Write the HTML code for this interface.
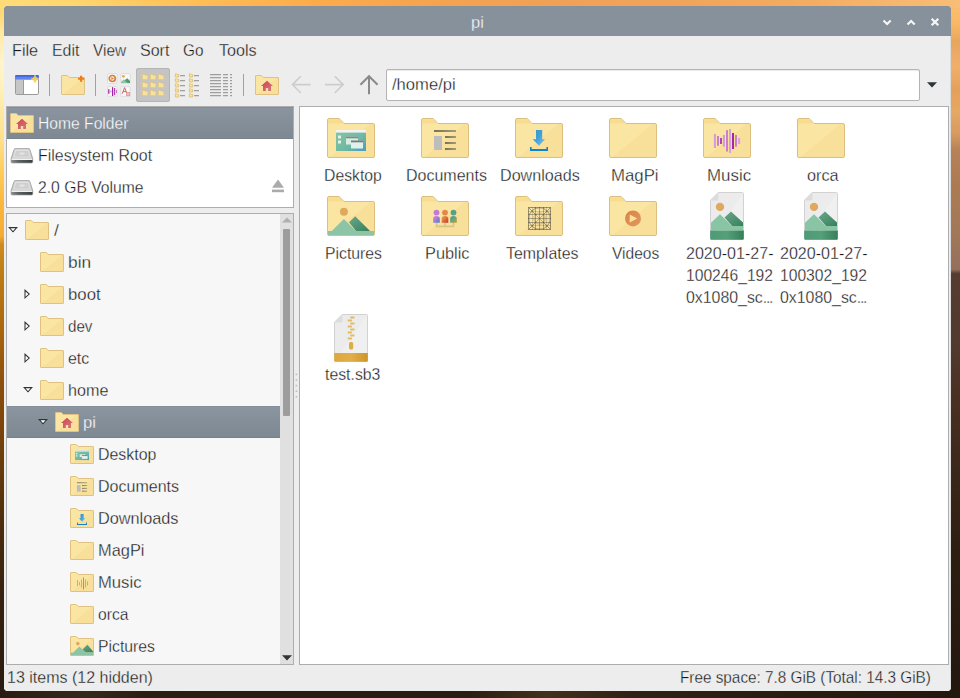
<!DOCTYPE html>
<html><head><meta charset="utf-8"><title>pi</title>
<style>
*{margin:0;padding:0;box-sizing:border-box}
html,body{width:960px;height:698px;overflow:hidden}
body{position:relative;font-family:"Liberation Sans",sans-serif;font-size:17px;background:#2a1c11}
.a{position:absolute}
.t{position:absolute;white-space:pre;line-height:20px;height:20px;transform-origin:0 0;font-size:17px}
svg{position:absolute;overflow:visible}
#wall-top{left:0;top:0;width:960px;height:8px;background:linear-gradient(90deg,#ffdc7a 0,#ffd56e 8%,#febf57 20%,#fcab4c 33%,#f4a350 46%,#efa157 58%,#f0a45a 70%,#f3ab60 82%,#f6b56c 92%,#f8bd76 100%)}
#wall-left{left:0;top:0;width:8px;height:698px;background:linear-gradient(180deg,#ffd668 0,#ffdc7c 2.5%,#ffeaa6 5%,#fff5cc 9%,#fff2c0 12%,#ffe79a 17%,#ffe08c 20%,#ffca54 25%,#fab73e 29%,#f5ac36 33.8%,#cf8c20 35%,#c4841a 37%,#bc7a14 40%,#aa680f 47%,#8e500c 54.5%,#7a440c 61.5%,#5e360c 70%,#4c2d0c 75%,#35210f 86%,#2a1b10 100%)}
#wall-right{left:944px;top:0;width:16px;height:698px;background:linear-gradient(180deg,#efae66 0,#fbbd6c 1.5%,#f8b764 3.5%,#e7a65e 6%,#efb06a 9.5%,#e5a058 13%,#e6a862 16%,#d99b60 19%,#b88157 21.5%,#ad7b52 26%,#a27858 33%,#94705c 38.6%,#573c30 39.2%,#51392d 50%,#4a3021 57%,#3c281a 67%,#2e1e12 79%,#23170e 100%)}
#wall-bot{left:0;top:686px;width:960px;height:12px;background:linear-gradient(90deg,#2a1c12 0,#342a1a 9%,#2b1d12 15%,#2c1e12 49%,#44311b 57%,#2f2114 66%,#291b10 85%,#24180e 100%)}
#win{left:4px;top:6px;width:947px;height:685px;background:#ededed;clip-path:polygon(2px 0,945px 0,947px 2px,947px 683px,945px 685px,2px 685px,0 683px,0 2px)}
#title{left:0;top:0;width:947px;height:30px;background:#87919b}
.pane{border:1px solid #adadad;background:#fff}
.sel{background:linear-gradient(180deg,#8b959f,#7e8892);box-shadow:inset 0 1px 0 #848e98,inset 0 -1px 0 #78828c}
.sep{width:1px;background:#a2a2a2}
</style></head>
<body>

<svg width="0" height="0" style="position:absolute">
<defs>
<linearGradient id="gFold" x1="0" y1="0" x2="1" y2="1"><stop offset="0" stop-color="#fae6a4"/><stop offset="0.52" stop-color="#fae5a2"/><stop offset="0.53" stop-color="#f8e09a"/><stop offset="1" stop-color="#f8e09a"/></linearGradient>
<linearGradient id="gTeal" x1="0" y1="0" x2="1" y2="1"><stop offset="0" stop-color="#86c6a2"/><stop offset="0.6" stop-color="#6fb8a4"/><stop offset="1" stop-color="#449cc0"/></linearGradient>
<linearGradient id="gBlue" x1="0" y1="0" x2="1" y2="1"><stop offset="0" stop-color="#2f97d2"/><stop offset="0.5" stop-color="#43a2d8"/><stop offset="1" stop-color="#8cc6e6"/></linearGradient>
<linearGradient id="gDk" x1="0" y1="0" x2="1" y2="0"><stop offset="0" stop-color="#767058"/><stop offset="1" stop-color="#a49c7c"/></linearGradient>
<linearGradient id="gGreenD" x1="0" y1="0" x2="1" y2="1"><stop offset="0" stop-color="#69a88a"/><stop offset="1" stop-color="#37805c"/></linearGradient>
<linearGradient id="gBand" x1="0" y1="0" x2="1" y2="0"><stop offset="0" stop-color="#4d9a76"/><stop offset="0.5" stop-color="#55a07c"/><stop offset="1" stop-color="#35805a"/></linearGradient>
<linearGradient id="gGold" x1="0" y1="0" x2="1" y2="0"><stop offset="0" stop-color="#dfa73c"/><stop offset="0.5" stop-color="#e2ae4a"/><stop offset="1" stop-color="#cf9426"/></linearGradient>
<linearGradient id="gSun" x1="0" y1="0" x2="1" y2="1"><stop offset="0" stop-color="#dcae52"/><stop offset="1" stop-color="#e2a46c"/></linearGradient>
<linearGradient id="gVid" x1="0" y1="0" x2="1" y2="1"><stop offset="0" stop-color="#d98242"/><stop offset="1" stop-color="#e39a60"/></linearGradient>
<linearGradient id="gHouse" x1="0" y1="0" x2="1" y2="1"><stop offset="0" stop-color="#c94450"/><stop offset="1" stop-color="#da7880"/></linearGradient>
<linearGradient id="gP1" x1="0" y1="0" x2="1" y2="1"><stop offset="0.3" stop-color="#c47ad8"/><stop offset="1" stop-color="#3f82d8"/></linearGradient>
<linearGradient id="gP2" x1="0" y1="0" x2="1" y2="1"><stop offset="0.3" stop-color="#e08a48"/><stop offset="1" stop-color="#cc2f26"/></linearGradient>
<linearGradient id="gP3" x1="0" y1="0" x2="1" y2="1"><stop offset="0.3" stop-color="#56a088"/><stop offset="1" stop-color="#c0a23c"/></linearGradient>
<linearGradient id="gDrive" x1="0" y1="0" x2="0" y2="1"><stop offset="0" stop-color="#d9d9d9"/><stop offset="1" stop-color="#c2c2c2"/></linearGradient>
<linearGradient id="gDriveF" x1="0" y1="0" x2="1" y2="0"><stop offset="0" stop-color="#8a8c8c"/><stop offset="0.35" stop-color="#5c6060"/><stop offset="1" stop-color="#3c4040"/></linearGradient>
<linearGradient id="gPaper" x1="0" y1="0" x2="1" y2="1"><stop offset="0" stop-color="#ebebeb"/><stop offset="0.5" stop-color="#ececec"/><stop offset="0.51" stop-color="#f0f0f0"/><stop offset="1" stop-color="#f0f0f0"/></linearGradient>

<symbol id="fL" viewBox="0 0 48 40">
 <path d="M2 .5H12.2L17 5.5H46Q47.5 5.5 47.5 7V38Q47.5 39.5 46 39.5H2Q.5 39.5 .5 38V2Q.5 .5 2 .5Z" fill="url(#gFold)" stroke="#dcbf80" stroke-width="1"/>
 <path d="M1 1.2H12L16.2 5.6H1Z" fill="#f5d988" opacity=".75"/>
</symbol>
<symbol id="fS" viewBox="0 0 24 20">
 <path d="M1 .5H6.3L8.3 2.5H23Q23.5 2.5 23.5 3V19Q23.5 19.5 23 19.5H1Q.5 19.5 .5 19V1Q.5 .5 1 .5Z" fill="url(#gFold)" stroke="#dfc183" stroke-width="1"/>
</symbol>

<symbol id="eDesktop" viewBox="0 0 48 40">
 <rect x="9" y="12" width="30" height="21" fill="url(#gTeal)"/>
 <rect x="9" y="12" width="30" height="2.6" fill="#f4f1f4"/>
 <rect x="11" y="17.5" width="3" height="3" fill="#e4f2ea"/><rect x="11" y="22.5" width="3" height="3" fill="#e4f2ea"/>
 <rect x="19" y="18.5" width="12" height="8" fill="#d8ece4"/><rect x="19" y="18.5" width="12" height="1.8" fill="#7d8a86"/>
 <rect x="24" y="22.5" width="12" height="8" fill="#e2f0ec"/><rect x="24" y="22.5" width="12" height="1.8" fill="#6f7c78"/>
</symbol>
<symbol id="eDocs" viewBox="0 0 48 40">
 <rect x="13" y="12" width="22" height="2" fill="url(#gDk)"/>
 <rect x="13" y="18" width="8" height="14" fill="#bdbdbd"/>
 <rect x="24" y="18" width="11" height="2" fill="url(#gDk)"/><rect x="24" y="24" width="11" height="2" fill="url(#gDk)"/><rect x="24" y="30" width="11" height="2" fill="url(#gDk)"/>
</symbol>
<symbol id="eDown" viewBox="0 0 48 40">
 <path d="M21 12H27.2V21.2H30L24 27.8L17.8 21.2H21Z" fill="url(#gBlue)"/>
 <path d="M15 29H16.6V31H31.4V29H33V33H15Z" fill="#1583c8"/>
</symbol>
<symbol id="eMusic" viewBox="0 0 48 40">
 <rect x="10.9" y="16" width="2" height="14" fill="#d49adb"/>
 <rect x="14" y="18" width="2" height="9.8" fill="#c87fd0"/>
 <rect x="17" y="20" width="2" height="6" fill="#b245b4"/>
 <rect x="19.9" y="17" width="2" height="11.7" fill="#d49adb"/>
 <rect x="23" y="12.2" width="2" height="21.3" fill="#c87fd0"/>
 <rect x="26" y="11" width="2" height="24" fill="#d6a2de"/>
 <rect x="29" y="15" width="2" height="16" fill="#a4279f"/>
 <rect x="32" y="17" width="2" height="11.7" fill="#c87fd0"/>
 <rect x="35.1" y="20" width="2" height="6" fill="#d6a2de"/>
</symbol>
<symbol id="eDownS" viewBox="0 0 24 20">
 <path d="M10.5 6.1H13.7V10.2H15.2L12.1 13.7L9 10.2H10.5Z" fill="url(#gBlue)"/>
 <path d="M7 14.6H7.9V15.9H16.1V14.6H17V17H7Z" fill="#1583c8"/>
</symbol>
<symbol id="ePicsS" viewBox="0 0 24 20">
 <circle cx="7.8" cy="7.6" r="1.8" fill="url(#gSun)"/>
 <path d="M12.4 13.6L17.4 8.8L23.2 15.4V16.6H15.4Z" fill="url(#gGreenD)"/>
 <path d="M.8 16.4H3.2L9.4 10.4L15.6 16.4H23.2V19.2H.8Z" fill="#8cc4a5"/>
</symbol>
<symbol id="eMusicS" viewBox="0 0 24 20">
 <g fill="#cf8fd8"><rect x="7.1" y="8" width=".9" height="6.2"/><rect x="9.1" y="10" width=".9" height="3"/><rect x="11.1" y="7.5" width=".9" height="8"/><rect x="13.1" y="5.4" width=".9" height="12.2" fill="#c568cc"/><rect x="15.1" y="7.5" width=".9" height="8"/><rect x="17.1" y="9.5" width=".9" height="4"/></g>
</symbol>
<symbol id="ePics" viewBox="0 0 48 40">
 <circle cx="16.9" cy="15.75" r="4" fill="url(#gSun)"/>
 <path d="M22 26.2L28.2 20.2L43 35H29Z" fill="url(#gGreenD)"/>
 <path d="M1 35H4.8L16.9 23L29 35H47V39H1Z" fill="#8cc4a5"/>
</symbol>
<symbol id="ePublic" viewBox="0 0 48 40">
 <path d="M15.5 26.5V30.4H32.5V26.5M24 26.5V30.4" fill="none" stroke="#d8c48a" stroke-width="1.6"/>
 <circle cx="15.5" cy="16.6" r="2.9" fill="#c47ad8"/><path d="M12.2 26.8V22.5Q12.2 20 15.5 20Q18.8 20 18.8 22.5V26.8Z" fill="url(#gP1)"/>
 <circle cx="24" cy="16.6" r="2.9" fill="#e08a48"/><path d="M20.7 26.8V22.5Q20.7 20 24 20Q27.3 20 27.3 22.5V26.8Z" fill="url(#gP2)"/>
 <circle cx="32.5" cy="16.6" r="2.9" fill="#56a088"/><path d="M29.2 26.8V22.5Q29.2 20 32.5 20Q35.8 20 35.8 22.5V26.8Z" fill="url(#gP3)"/>
</symbol>
<symbol id="eTempl" viewBox="0 0 48 40">
 <g fill="none" stroke="#3c3c3c">
 <rect x="13.5" y="11.5" width="22" height="22" stroke-width="1" opacity=".5"/>
 <path d="M20.5 11V34M24.5 11V34M28.5 11V34M13 18.5H36M13 22.5H36M13 26.5H36" stroke-width="1" opacity=".4"/>
 <path d="M17.5 11V34M31.5 11V34M13 15.5H36M13 29.5H36" stroke-width="1" opacity=".2"/>
 <path d="M13.5 11.5L35.5 33.5M35.5 11.5L13.5 33.5" stroke-width=".7" opacity=".45"/>
 <path d="M13.5 11.5L20.5 18.5M13.5 18.5L20.5 11.5M28.5 11.5L35.5 18.5M28.5 18.5L35.5 11.5M13.5 26.5L20.5 33.5M13.5 33.5L20.5 26.5M28.5 26.5L35.5 33.5M28.5 33.5L35.5 26.5" stroke-width=".6" opacity=".4"/>
 <circle cx="24.5" cy="22.5" r="10.6" stroke-width=".7" opacity=".45"/><circle cx="24.5" cy="22.5" r="5.6" stroke-width=".7" opacity=".4"/>
 </g>
</symbol>
<symbol id="eVideo" viewBox="0 0 48 40">
 <circle cx="24" cy="22.4" r="8" fill="url(#gVid)"/>
 <path d="M20.7 18.4V26.6L28.2 22.4Z" fill="#fae3a0"/>
</symbol>
<symbol id="eHome" viewBox="0 0 48 40">
 <path d="M24 11.4L36 21.8H32V32H26.4V26H21.6V32H16V21.8H12Z" fill="url(#gHouse)"/>
</symbol>

<symbol id="imgfile" viewBox="0 0 34 48">
 <path d="M8.2 .5H32.5Q33.5 .5 33.5 1.5V46.5Q33.5 47.5 32.5 47.5H1.5Q.5 47.5 .5 46.5V8.2Z" fill="url(#gPaper)" stroke="#d2d2d2"/>
 <path d="M8.4 .8V7Q8.4 8.4 7 8.4H.8Z" fill="#dcdcdc"/>
 <circle cx="10" cy="14.9" r="4.2" fill="url(#gSun)"/>
 <path d="M14.5 25.5L21 19.5L33 30.6V34H22Z" fill="url(#gGreenD)"/>
 <path d="M1 30.7L10 22.3L22 34H33V38.6H1Z" fill="#88c5a4"/>
 <path d="M.2 38.6H33.8V46.6Q33.8 47.8 32.6 47.8H1.4Q.2 47.8 .2 46.6Z" fill="url(#gBand)"/>
</symbol>
<symbol id="zipfile" viewBox="0 0 34 48">
 <path d="M8.2 .5H32.5Q33.5 .5 33.5 1.5V46.5Q33.5 47.5 32.5 47.5H1.5Q.5 47.5 .5 46.5V8.2Z" fill="url(#gPaper)" stroke="#d2d2d2"/>
 <path d="M8.4 .8V7Q8.4 8.4 7 8.4H.8Z" fill="#dcdcdc"/>
 <g fill="#e5bb5c">
 <rect x="16.2" y="2.6" width="4.4" height="1.8" rx=".6"/><rect x="13.6" y="5.6" width="4.4" height="1.8" rx=".6"/>
 <rect x="16.2" y="8.6" width="4.4" height="1.8" rx=".6"/><rect x="13.6" y="11.6" width="4.4" height="1.8" rx=".6"/>
 <rect x="16.2" y="14.6" width="4.4" height="1.8" rx=".6"/><rect x="13.6" y="17.6" width="4.4" height="1.8" rx=".6"/>
 <rect x="16.2" y="20.6" width="4.4" height="1.8" rx=".6"/><rect x="13.6" y="23.6" width="4.4" height="1.8" rx=".6"/>
 <rect x="15" y="28" width="4.2" height="7.6" rx="1.6" fill="#dfad48"/>
 </g>
 <path d="M.2 39H33.8V46.6Q33.8 47.8 32.6 47.8H1.4Q.2 47.8 .2 46.6Z" fill="url(#gGold)"/>
</symbol>
<symbol id="drive" viewBox="0 0 24 16">
 <path d="M5 .6H19Q19.5 .6 19.7 1.1L22.7 10.4V13.8Q22.7 14.9 21.6 14.9H2.2Q1.1 14.9 1.1 13.8V10.4L4.3 1.1Q4.5 .6 5 .6Z" fill="url(#gDrive)" stroke="#9a9a9a" stroke-width=".8"/>
 <path d="M5.8 2.4H18.2L20.2 9.2H3.6Z" fill="#d0d0d0" stroke="#e6e6e6" stroke-width=".7"/>
 <ellipse cx="12" cy="5.6" rx="3" ry="1.1" fill="#e4e4e4"/>
 <path d="M1.3 12.1H22.5V13.8Q22.5 14.7 21.6 14.7H2.2Q1.3 14.7 1.3 13.8Z" fill="url(#gDriveF)"/>
 <path d="M1.8 11.3H22" stroke="#f6f6f6" stroke-width="1.2"/>
</symbol>
</defs></svg>

<div class="a" id="wall-left"></div><div class="a" id="wall-right"></div><div class="a" id="wall-top"></div><div class="a" id="wall-bot"></div>
<div class="a" id="win"><div class="a" id="title"></div></div>
<div class="a" style="left:950px;top:36px;width:1px;height:653px;background:#d9dcdf"></div>
<svg style="left:870px;top:6px" width="80" height="30" viewBox="870 6 80 30"><g fill="none" stroke="#f6f6f6" stroke-width="2.1"><path d="M883.5 20.5L887.1 24.1L890.7 20.5"/><path d="M907.5 24.5L911.1 20.9L914.7 24.5"/><path d="M931.7 18.7L938.3 25.3M938.3 18.7L931.7 25.3" stroke-width="2.25"/></g></svg>
<svg style="left:15px;top:75px" width="24" height="20" viewBox="0 0 24 20"><rect x=".5" y=".5" width="23" height="19" rx="1.3" fill="#fff" stroke="#9a9a9a"/><path d="M0 4.4V1.6Q0 0 1.6 0H22.4Q24 0 24 1.6V4.4Z" fill="#6283ee"/><path d="M0 1.8V1.6Q0 0 1.6 0H22.4Q24 0 24 1.6V1.8Z" fill="#4464dc"/><rect x="1" y="4.6" width="7.2" height="14.4" fill="#c6c6c6"/><rect x="8" y="4.6" width="1" height="14.6" fill="#9a9a9a"/><rect x=".8" y="4.2" width="22.4" height=".8" fill="#9a9a9a"/><path d="M20 .2Q20.4 3.4 23.8 4Q20.4 4.6 20 7.8Q19.6 4.6 16.2 4Q19.6 3.4 20 .2Z" fill="#f5cf5c" stroke="#f5cf5c" stroke-width=".8" stroke-linejoin="round"/></svg>
<div class="a sep" style="left:49px;top:74px;height:22px"></div>
<svg style="left:61px;top:75px" width="24" height="20"><use href="#fS"/></svg>
<svg style="left:61px;top:75px" width="24" height="20" viewBox="0 0 24 20"><path d="M17.1 3.8H23.1M20.1 .8V6.8" stroke="#ee7a18" stroke-width="2.1" fill="none"/></svg>
<div class="a sep" style="left:95px;top:74px;height:22px"></div>
<svg style="left:107px;top:73px" width="24" height="24" viewBox="0 0 24 24"><g fill="#f7f7f7" stroke="#dadada" stroke-width=".9"><rect x=".6" y=".6" width="9.4" height="9.8" rx=".8"/><rect x="13.8" y=".6" width="9.4" height="9.8" rx=".8"/><rect x=".6" y="13.6" width="9.4" height="9.8" rx=".8"/><rect x="13.8" y="13.6" width="9.4" height="9.8" rx=".8"/></g><circle cx="5.3" cy="5.5" r="3" fill="none" stroke="#da8038" stroke-width="1.7"/><path d="M4.3 3.9V7.1L7.1 5.5Z" fill="#da8038"/><circle cx="16.4" cy="3.3" r="1.4" fill="#dcae52"/><path d="M17.4 7.6L20.2 5.2L23 8V10H17.4Z" fill="#4f9874"/><path d="M14 9L16.8 6.2L20.6 10H14Z" fill="#8cc4a5"/><g fill="#a11fa0"><rect x="1.2" y="16.2" width="1.2" height="4.6"/><rect x="3.4" y="17.6" width="1" height="1.8" fill="#c070c4"/><rect x="5" y="14.2" width="1.2" height="8.8"/><rect x="7" y="15" width="1.2" height="7.2" fill="#b040b0"/><rect x="9" y="17" width=".9" height="3" fill="#c070c4"/></g><path d="M15.2 20.8L17.6 14.6L20 20.8M16.1 18.6H19.1" fill="none" stroke="#d6606a" stroke-width="1"/><rect x="19.6" y="19.4" width="3.2" height="3.4" fill="#efb8ba" stroke="#dc8a90" stroke-width=".6"/></svg>
<div class="a" style="left:136px;top:68px;width:34px;height:34px;background:#c4c4c4;border:1px solid #b4b4b4;border-radius:2px"></div>
<svg style="left:142px;top:74px" width="22" height="22" viewBox="0 0 22 22"><path d="M0.4 0.4H2.4L3.2 1.2H5.8V5.6H0.4Z" fill="#f9e29c" stroke="#e3c67e" stroke-width=".8"/><path d="M8.4 0.4H10.4L11.2 1.2H13.8V5.6H8.4Z" fill="#f9e29c" stroke="#e3c67e" stroke-width=".8"/><path d="M16.4 0.4H18.4L19.2 1.2H21.8V5.6H16.4Z" fill="#f9e29c" stroke="#e3c67e" stroke-width=".8"/><path d="M0.4 8.4H2.4L3.2 9.2H5.8V13.6H0.4Z" fill="#f9e29c" stroke="#e3c67e" stroke-width=".8"/><path d="M8.4 8.4H10.4L11.2 9.2H13.8V13.6H8.4Z" fill="#f9e29c" stroke="#e3c67e" stroke-width=".8"/><path d="M16.4 8.4H18.4L19.2 9.2H21.8V13.6H16.4Z" fill="#f9e29c" stroke="#e3c67e" stroke-width=".8"/><path d="M0.4 16.4H2.4L3.2 17.2H5.8V21.6H0.4Z" fill="#f9e29c" stroke="#e3c67e" stroke-width=".8"/><path d="M8.4 16.4H10.4L11.2 17.2H13.8V21.6H8.4Z" fill="#f9e29c" stroke="#e3c67e" stroke-width=".8"/><path d="M16.4 16.4H18.4L19.2 17.2H21.8V21.6H16.4Z" fill="#f9e29c" stroke="#e3c67e" stroke-width=".8"/></svg>
<svg style="left:175px;top:73px" width="24" height="24" viewBox="0 0 24 24"><path d="M0.4 0.8H1.6L2.2 1.4H3.6V4.0H0.4Z" fill="#f9e29c" stroke="#dcbe70" stroke-width=".8"/><rect x="5" y="2.2" width="5" height="1" fill="#8c8c8c"/><path d="M14.4 0.8H15.6L16.2 1.4H17.6V4.0H14.4Z" fill="#f9e29c" stroke="#dcbe70" stroke-width=".8"/><rect x="19" y="2.2" width="5" height="1" fill="#8c8c8c"/><path d="M0.4 5.800000000000001H1.6L2.2 6.4H3.6V9.0H0.4Z" fill="#f9e29c" stroke="#dcbe70" stroke-width=".8"/><rect x="5" y="7.2" width="5" height="1" fill="#8c8c8c"/><path d="M14.4 5.800000000000001H15.6L16.2 6.4H17.6V9.0H14.4Z" fill="#f9e29c" stroke="#dcbe70" stroke-width=".8"/><rect x="19" y="7.2" width="5" height="1" fill="#8c8c8c"/><path d="M0.4 10.8H1.6L2.2 11.4H3.6V14.0H0.4Z" fill="#f9e29c" stroke="#dcbe70" stroke-width=".8"/><rect x="5" y="12.200000000000001" width="5" height="1" fill="#8c8c8c"/><path d="M14.4 10.8H15.6L16.2 11.4H17.6V14.0H14.4Z" fill="#f9e29c" stroke="#dcbe70" stroke-width=".8"/><rect x="19" y="12.200000000000001" width="5" height="1" fill="#8c8c8c"/><path d="M0.4 15.8H1.6L2.2 16.4H3.6V19.0H0.4Z" fill="#f9e29c" stroke="#dcbe70" stroke-width=".8"/><rect x="5" y="17.2" width="5" height="1" fill="#8c8c8c"/><path d="M14.4 15.8H15.6L16.2 16.4H17.6V19.0H14.4Z" fill="#f9e29c" stroke="#dcbe70" stroke-width=".8"/><rect x="19" y="17.2" width="5" height="1" fill="#8c8c8c"/><path d="M0.4 20.799999999999997H1.6L2.2 21.4H3.6V24.0H0.4Z" fill="#f9e29c" stroke="#dcbe70" stroke-width=".8"/><rect x="5" y="22.2" width="5" height="1" fill="#8c8c8c"/><path d="M14.4 20.799999999999997H15.6L16.2 21.4H17.6V24.0H14.4Z" fill="#f9e29c" stroke="#dcbe70" stroke-width=".8"/><rect x="19" y="22.2" width="5" height="1" fill="#8c8c8c"/></svg>
<svg style="left:210px;top:74px" width="22" height="22" viewBox="0 0 22 22"><rect x="0" y="0.2" width="11" height="1" fill="#8a8a8a"/><rect x="13" y="0.2" width="5" height="1" fill="#8a8a8a"/><rect x="20" y="0.2" width="2" height="1" fill="#8a8a8a"/><rect x="0" y="3.2" width="11" height="1" fill="#8a8a8a"/><rect x="13" y="3.2" width="5" height="1" fill="#8a8a8a"/><rect x="20" y="3.2" width="2" height="1" fill="#8a8a8a"/><rect x="0" y="6.2" width="11" height="1" fill="#8a8a8a"/><rect x="13" y="6.2" width="5" height="1" fill="#8a8a8a"/><rect x="20" y="6.2" width="2" height="1" fill="#8a8a8a"/><rect x="0" y="9.2" width="11" height="1" fill="#8a8a8a"/><rect x="13" y="9.2" width="5" height="1" fill="#8a8a8a"/><rect x="20" y="9.2" width="2" height="1" fill="#8a8a8a"/><rect x="0" y="12.2" width="11" height="1" fill="#8a8a8a"/><rect x="13" y="12.2" width="5" height="1" fill="#8a8a8a"/><rect x="20" y="12.2" width="2" height="1" fill="#8a8a8a"/><rect x="0" y="15.2" width="11" height="1" fill="#8a8a8a"/><rect x="13" y="15.2" width="5" height="1" fill="#8a8a8a"/><rect x="20" y="15.2" width="2" height="1" fill="#8a8a8a"/><rect x="0" y="18.2" width="11" height="1" fill="#8a8a8a"/><rect x="13" y="18.2" width="5" height="1" fill="#8a8a8a"/><rect x="20" y="18.2" width="2" height="1" fill="#8a8a8a"/><rect x="0" y="21.2" width="11" height="1" fill="#8a8a8a"/><rect x="13" y="21.2" width="5" height="1" fill="#8a8a8a"/><rect x="20" y="21.2" width="2" height="1" fill="#8a8a8a"/></svg>
<div class="a sep" style="left:243px;top:74px;height:22px"></div>
<svg style="left:255px;top:75px" width="24" height="20"><use href="#fS"/><use href="#eHome" width="24" height="20"/></svg>
<svg style="left:288px;top:70px" width="96" height="30" viewBox="288 70 96 30"><g fill="none" stroke-linecap="butt"><path d="M310.6 84.6H293M300.8 76.2L292.4 84.6L300.8 93" stroke="#cdcdcd" stroke-width="1.6"/><path d="M325 84.6H342.6M334.8 76.2L343.2 84.6L334.8 93" stroke="#cdcdcd" stroke-width="1.6"/><path d="M369 94.2V76.4M360.4 84.8L369 76.2L377.6 84.8" stroke="#8a8a8a" stroke-width="2"/></g></svg>
<div class="a" style="left:386px;top:69px;width:534px;height:32px;background:#fff;border:1px solid #b4b4b4;border-radius:2px;box-shadow:inset 0 1px 1px #e9e9e9"></div>
<svg style="left:927px;top:82px" width="10" height="6" viewBox="0 0 10 6"><path d="M0 .2H10L5 5.4Z" fill="#2e3438"/></svg>
<div class="a pane" style="left:6px;top:106px;width:288px;height:102px"></div>
<div class="a sel" style="left:7px;top:107px;width:286px;height:32px"></div>
<svg style="left:10px;top:113px" width="24" height="20"><use href="#fS"/><use href="#eHome" width="24" height="20"/></svg>
<svg style="left:10px;top:148px" width="24" height="16"><use href="#drive"/></svg>
<svg style="left:10px;top:180px" width="24" height="16"><use href="#drive"/></svg>
<svg style="left:271px;top:179px" width="14" height="14" viewBox="0 0 14 14"><path d="M7 .6L13 8.8H1Z" fill="#ababab"/><rect x="1" y="10.6" width="12" height="2.6" fill="#ababab"/></svg>
<div class="a pane" style="left:6px;top:213px;width:288px;height:452px;background:#f7f7f7"></div>
<div class="a sel" style="left:7px;top:406px;width:273px;height:32px"></div>
<div class="a" style="left:280px;top:214px;width:13px;height:450px;background:#e0e0e0"></div>
<div class="a" style="left:283px;top:229px;width:7px;height:187px;background:#9d9d9d;border-radius:1px"></div>
<svg style="left:282px;top:217px" width="10" height="6" viewBox="0 0 10 6"><path d="M0 5.6H10L5 .4Z" fill="#b0b0b0"/></svg>
<svg style="left:282px;top:655px" width="10" height="6" viewBox="0 0 10 6"><path d="M0 .2H10L5 5.4Z" fill="#2e3438"/></svg>
<svg style="left:295px;top:373px" width="3" height="26" viewBox="0 0 3 26"><rect x=".6" y="0.6" width="1.6" height="1.6" fill="#bebebe"/><rect x=".6" y="6.2" width="1.6" height="1.6" fill="#bebebe"/><rect x=".6" y="11.8" width="1.6" height="1.6" fill="#bebebe"/><rect x=".6" y="17.4" width="1.6" height="1.6" fill="#bebebe"/><rect x=".6" y="23.0" width="1.6" height="1.6" fill="#bebebe"/></svg>
<svg style="left:25px;top:220px" width="24" height="20"><use href="#fS"/></svg>
<svg style="left:6.800000000000001px;top:225px" width="12" height="10" viewBox="0 0 12 10"><path d="M2.2 2.6H9.8L6 6.8Z" fill="#fff" stroke="#2e3436" stroke-width="1.05" stroke-linejoin="miter"/></svg>
<svg style="left:40px;top:252px" width="24" height="20"><use href="#fS"/></svg>
<svg style="left:40px;top:284px" width="24" height="20"><use href="#fS"/></svg>
<svg style="left:22.4px;top:287.8px" width="10" height="12" viewBox="0 0 10 12"><path d="M3 2.3V9.9L7.2 6.1Z" fill="#fff" stroke="#2e3436" stroke-width="1.05" stroke-linejoin="miter"/></svg>
<svg style="left:40px;top:316px" width="24" height="20"><use href="#fS"/></svg>
<svg style="left:22.4px;top:319.8px" width="10" height="12" viewBox="0 0 10 12"><path d="M3 2.3V9.9L7.2 6.1Z" fill="#fff" stroke="#2e3436" stroke-width="1.05" stroke-linejoin="miter"/></svg>
<svg style="left:40px;top:348px" width="24" height="20"><use href="#fS"/></svg>
<svg style="left:22.4px;top:351.8px" width="10" height="12" viewBox="0 0 10 12"><path d="M3 2.3V9.9L7.2 6.1Z" fill="#fff" stroke="#2e3436" stroke-width="1.05" stroke-linejoin="miter"/></svg>
<svg style="left:40px;top:380px" width="24" height="20"><use href="#fS"/></svg>
<svg style="left:21.8px;top:385px" width="12" height="10" viewBox="0 0 12 10"><path d="M2.2 2.6H9.8L6 6.8Z" fill="#fff" stroke="#2e3436" stroke-width="1.05" stroke-linejoin="miter"/></svg>
<svg style="left:55px;top:412px" width="24" height="20"><use href="#fS"/><use href="#eHome" width="24" height="20"/></svg>
<svg style="left:36.8px;top:417px" width="12" height="10" viewBox="0 0 12 10"><path d="M2.2 2.6H9.8L6 6.8Z" fill="#fff" stroke="#2e3436" stroke-width="1.05" stroke-linejoin="miter"/></svg>
<svg style="left:70px;top:444px" width="24" height="20"><use href="#fS"/><use href="#eDesktop" width="24" height="20" transform="translate(12 10.4) scale(.93) translate(-12 -10.4)"/></svg>
<svg style="left:70px;top:476px" width="24" height="20"><use href="#fS"/><use href="#eDocs" width="24" height="20" transform="translate(12 10.4) scale(.93) translate(-12 -10.4)"/></svg>
<svg style="left:70px;top:508px" width="24" height="20"><use href="#fS"/><use href="#eDownS" width="24" height="20"/></svg>
<svg style="left:70px;top:540px" width="24" height="20"><use href="#fS"/></svg>
<svg style="left:70px;top:572px" width="24" height="20"><use href="#fS"/><use href="#eMusicS" width="24" height="20"/></svg>
<svg style="left:70px;top:604px" width="24" height="20"><use href="#fS"/></svg>
<svg style="left:70px;top:636px" width="24" height="20"><use href="#fS"/><use href="#ePicsS" width="24" height="20"/></svg>
<div class="a pane" style="left:299px;top:106px;width:650px;height:559px"></div>
<svg style="left:327px;top:118px" width="48" height="40"><use href="#fL"/><use href="#eDesktop" width="48" height="40"/></svg>
<svg style="left:421px;top:118px" width="48" height="40"><use href="#fL"/><use href="#eDocs" width="48" height="40"/></svg>
<svg style="left:515px;top:118px" width="48" height="40"><use href="#fL"/><use href="#eDown" width="48" height="40"/></svg>
<svg style="left:609px;top:118px" width="48" height="40"><use href="#fL"/></svg>
<svg style="left:703px;top:118px" width="48" height="40"><use href="#fL"/><use href="#eMusic" width="48" height="40"/></svg>
<svg style="left:797px;top:118px" width="48" height="40"><use href="#fL"/></svg>
<svg style="left:327px;top:196px" width="48" height="40"><use href="#fL"/><use href="#ePics" width="48" height="40"/></svg>
<svg style="left:421px;top:196px" width="48" height="40"><use href="#fL"/><use href="#ePublic" width="48" height="40"/></svg>
<svg style="left:515px;top:196px" width="48" height="40"><use href="#fL"/><use href="#eTempl" width="48" height="40"/></svg>
<svg style="left:609px;top:196px" width="48" height="40"><use href="#fL"/><use href="#eVideo" width="48" height="40"/></svg>
<svg style="left:710px;top:192px" width="34" height="48"><use href="#imgfile"/></svg>
<svg style="left:804px;top:192px" width="34" height="48"><use href="#imgfile"/></svg>
<svg style="left:334px;top:314px" width="34" height="48"><use href="#zipfile"/></svg>
<span class="t" style="left:470.73px;top:13.0px;color:#fefefe;-webkit-text-stroke:0.32px #87919b;transform:scaleX(0.9727)">pi</span>
<span class="t" style="left:12.15px;top:41.0px;color:#141414;-webkit-text-stroke:0.32px #ededed;transform:scaleX(0.9538)">File</span>
<span class="t" style="left:51.56px;top:41.0px;color:#141414;-webkit-text-stroke:0.32px #ededed;transform:scaleX(0.9357)">Edit</span>
<span class="t" style="left:93.30px;top:41.0px;color:#141414;-webkit-text-stroke:0.32px #ededed;transform:scaleX(0.9054)">View</span>
<span class="t" style="left:140.46px;top:41.0px;color:#141414;-webkit-text-stroke:0.32px #ededed;transform:scaleX(0.9433)">Sort</span>
<span class="t" style="left:183.40px;top:41.0px;color:#141414;-webkit-text-stroke:0.32px #ededed;transform:scaleX(0.9000)">Go</span>
<span class="t" style="left:218.70px;top:41.0px;color:#141414;-webkit-text-stroke:0.32px #ededed;transform:scaleX(0.9487)">Tools</span>
<span class="t" style="left:391.50px;top:75.2px;color:#141414;-webkit-text-stroke:0.32px #ffffff;transform:scaleX(0.9766)">/home/pi</span>
<span class="t" style="left:37.78px;top:114.0px;color:#ffffff;-webkit-text-stroke:0.32px #848e98;transform:scaleX(0.9206)">Home Folder</span>
<span class="t" style="left:37.76px;top:146.0px;color:#141414;-webkit-text-stroke:0.32px #ffffff;transform:scaleX(0.9364)">Filesystem Root</span>
<span class="t" style="left:37.78px;top:178.0px;color:#141414;-webkit-text-stroke:0.32px #ffffff;transform:scaleX(0.9230)">2.0 GB Volume</span>
<span class="t" style="left:53.80px;top:220.6px;color:#141414;-webkit-text-stroke:0.32px #f7f7f7;transform:scaleX(1.0400)">/</span>
<span class="t" style="left:67.78px;top:252.6px;color:#141414;-webkit-text-stroke:0.32px #f7f7f7;transform:scaleX(1.0190)">bin</span>
<span class="t" style="left:67.81px;top:284.6px;color:#141414;-webkit-text-stroke:0.32px #f7f7f7;transform:scaleX(0.9875)">boot</span>
<span class="t" style="left:67.91px;top:316.6px;color:#141414;-webkit-text-stroke:0.32px #f7f7f7;transform:scaleX(0.8923)">dev</span>
<span class="t" style="left:67.86px;top:348.6px;color:#141414;-webkit-text-stroke:0.32px #f7f7f7;transform:scaleX(0.9381)">etc</span>
<span class="t" style="left:67.85px;top:380.6px;color:#141414;-webkit-text-stroke:0.32px #f7f7f7;transform:scaleX(0.9488)">home</span>
<span class="t" style="left:82.92px;top:412.6px;color:#ffffff;-webkit-text-stroke:0.32px #848e98;transform:scaleX(0.9818)">pi</span>
<span class="t" style="left:97.96px;top:444.6px;color:#141414;-webkit-text-stroke:0.32px #f7f7f7;transform:scaleX(0.9361)">Desktop</span>
<span class="t" style="left:97.96px;top:476.6px;color:#141414;-webkit-text-stroke:0.32px #f7f7f7;transform:scaleX(0.9424)">Documents</span>
<span class="t" style="left:97.94px;top:508.6px;color:#141414;-webkit-text-stroke:0.32px #f7f7f7;transform:scaleX(0.9566)">Downloads</span>
<span class="t" style="left:97.93px;top:540.6px;color:#141414;-webkit-text-stroke:0.32px #f7f7f7;transform:scaleX(0.9652)">MagPi</span>
<span class="t" style="left:97.92px;top:572.6px;color:#141414;-webkit-text-stroke:0.32px #f7f7f7;transform:scaleX(0.9791)">Music</span>
<span class="t" style="left:97.98px;top:604.6px;color:#141414;-webkit-text-stroke:0.32px #f7f7f7;transform:scaleX(0.9219)">orca</span>
<span class="t" style="left:97.97px;top:636.6px;color:#141414;-webkit-text-stroke:0.32px #f7f7f7;transform:scaleX(0.9283)">Pictures</span>
<span class="t" style="left:7.06px;top:668.0px;color:#141414;-webkit-text-stroke:0.32px #ededed;transform:scaleX(0.9412)">13 items (12 hidden)</span>
<span class="t" style="left:679.80px;top:667.8px;color:#141414;-webkit-text-stroke:0.32px #ededed;transform:scaleX(0.9000)">Free space: 7.8 GiB (Total: 14.3 GiB)</span>
<span class="t" style="left:323.77px;top:165.5px;color:#141414;-webkit-text-stroke:0.32px #ffffff;transform:scaleX(0.9279)">Desktop</span>
<span class="t" style="left:406.36px;top:165.5px;color:#141414;-webkit-text-stroke:0.32px #ffffff;transform:scaleX(0.9412)">Documents</span>
<span class="t" style="left:500.35px;top:165.5px;color:#141414;-webkit-text-stroke:0.32px #ffffff;transform:scaleX(0.9482)">Downloads</span>
<span class="t" style="left:611.31px;top:165.5px;color:#141414;-webkit-text-stroke:0.32px #ffffff;transform:scaleX(0.9870)">MagPi</span>
<span class="t" style="left:707.31px;top:165.5px;color:#141414;-webkit-text-stroke:0.32px #ffffff;transform:scaleX(0.9930)">Music</span>
<span class="t" style="left:806.74px;top:165.5px;color:#141414;-webkit-text-stroke:0.32px #ffffff;transform:scaleX(0.9562)">orca</span>
<span class="t" style="left:324.77px;top:243.5px;color:#141414;-webkit-text-stroke:0.32px #ffffff;transform:scaleX(0.9267)">Pictures</span>
<span class="t" style="left:424.74px;top:243.5px;color:#141414;-webkit-text-stroke:0.32px #ffffff;transform:scaleX(0.9622)">Public</span>
<span class="t" style="left:505.70px;top:243.5px;color:#141414;-webkit-text-stroke:0.32px #ffffff;transform:scaleX(0.9351)">Templates</span>
<span class="t" style="left:611.70px;top:243.5px;color:#141414;-webkit-text-stroke:0.32px #ffffff;transform:scaleX(0.9137)">Videos</span>
<span class="t" style="left:685.75px;top:243.5px;color:#141414;-webkit-text-stroke:0.32px #ffffff;transform:scaleX(0.9451)">2020-01-27-</span>
<span class="t" style="left:685.78px;top:265.5px;color:#141414;-webkit-text-stroke:0.32px #ffffff;transform:scaleX(0.9204)">100246_192</span>
<span class="t" style="left:685.77px;top:287.5px;color:#141414;-webkit-text-stroke:0.32px #ffffff;transform:scaleX(0.9341)">0x1080_sc<span style="letter-spacing:-1.4px">...</span></span>
<span class="t" style="left:779.75px;top:243.5px;color:#141414;-webkit-text-stroke:0.32px #ffffff;transform:scaleX(0.9451)">2020-01-27-</span>
<span class="t" style="left:779.78px;top:265.5px;color:#141414;-webkit-text-stroke:0.32px #ffffff;transform:scaleX(0.9204)">100302_192</span>
<span class="t" style="left:779.77px;top:287.5px;color:#141414;-webkit-text-stroke:0.32px #ffffff;transform:scaleX(0.9341)">0x1080_sc<span style="letter-spacing:-1.4px">...</span></span>
<span class="t" style="left:325.30px;top:365.2px;color:#141414;-webkit-text-stroke:0.32px #ffffff;transform:scaleX(0.9305)">test.sb3</span>
</body></html>
